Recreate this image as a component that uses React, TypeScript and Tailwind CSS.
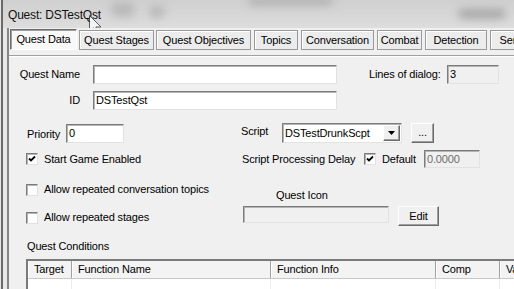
import React from "react";

const sunken =
  "border border-t-[#7c7c7c] border-l-[#7c7c7c] border-r-[#e2e2e2] border-b-[#e2e2e2] shadow-[inset_1px_1px_0_#b4b4b4]";
const raised =
  "border border-t-[#ffffff] border-l-[#ffffff] border-r-[#6a6a6a] border-b-[#6a6a6a] shadow-[inset_-1px_-1px_0_#a0a0a0]";

const tabs = [
  { label: "Quest Data", cls: "ml-[1px] w-[67px]", active: true },
  { label: "Quest Stages", cls: "ml-[2px] w-[75px]" },
  { label: "Quest Objectives", cls: "ml-[2px] w-[95px]" },
  { label: "Topics", cls: "ml-[3px] w-[44px]" },
  { label: "Conversation", cls: "ml-[3px] w-[73px]" },
  { label: "Combat", cls: "ml-[3px] w-[45px]" },
  { label: "Detection", cls: "ml-[3px] w-[62px]" },
  { label: "Services", cls: "ml-[3px] w-[60px]" },
];

const columns = [
  { label: "Target", cls: "w-[44px]" },
  { label: "Function Name", cls: "w-[199px]" },
  { label: "Function Info", cls: "w-[165px]" },
  { label: "Comp", cls: "w-[64px]" },
  { label: "Value", cls: "w-[60px]" },
];

function Field({
  className,
  disabled,
  children,
}: {
  className: string;
  disabled?: boolean;
  children?: React.ReactNode;
}) {
  return (
    <div
      className={`${className} ${sunken} ${
        disabled ? "bg-[#f0f0f0]" : "bg-white"
      } shrink-0 flex items-center pl-[2px] whitespace-nowrap overflow-hidden`}
    >
      {children}
    </div>
  );
}

function Check({ checked }: { checked?: boolean }) {
  return (
    <div className={`w-[12px] h-[12px] shrink-0 bg-white ${sunken} flex items-center justify-center`}>
      {checked && (
        <svg width="8" height="8" viewBox="0 0 8 8">
          <path d="M1 3.5 L3 5.5 L7 1.5" stroke="#000" strokeWidth="1.8" fill="none" />
        </svg>
      )}
    </div>
  );
}

export default function App() {
  return (
    <div className="w-[514px] h-[289px] overflow-hidden bg-[#e6e6e6] font-['Liberation_Sans',Arial,sans-serif] text-[11px] leading-[13px] tracking-[-0.15px] text-black">
      <div className="ml-[1px] h-full border-l-2 border-[#6a6a6a] flex flex-col">
        {/* Title bar */}
        <div className="relative h-[28px] shrink-0 overflow-hidden bg-linear-to-b from-[#cfcfcf] to-[#dddddd]">
          <div className="absolute left-[108px] top-[3px] w-[24px] h-[14px] rounded-full bg-[#8c8c8c] opacity-40 blur-[5px]" />
          <div className="absolute left-[146px] top-[6px] w-[16px] h-[12px] rounded-full bg-[#8c8c8c] opacity-40 blur-[4px]" />
          <div className="absolute left-[245px] top-[-4px] w-[85px] h-[10px] rounded-full bg-[#8c8c8c] opacity-40 blur-[4px]" />
          <div className="absolute left-[455px] top-[9px] w-[48px] h-[10px] rounded-full bg-[#7c7c7c] opacity-50 blur-[4px]" />
          <div className="relative pl-[5px] pt-[8px] text-[12px] leading-[14px] tracking-[-0.2px] text-[#111]">
            Quest: DSTestQst
          </div>
          <svg
            className="absolute left-[86px] top-[15px] opacity-80"
            width="13"
            height="21"
            viewBox="0 0 13 21"
          >
            <path
              d="M0.5 0.5 L0.5 16.5 L4.5 12.8 L7.2 19.5 L9.6 18.5 L6.9 12 L12 12 Z"
              fill="#fafafa"
              stroke="#3c3c3c"
              strokeWidth="1"
              strokeLinejoin="round"
            />
          </svg>
        </div>

        {/* Frame + client */}
        <div className="flex flex-1 min-h-0">
          <div className="w-[4px] shrink-0 bg-[#e8e8e8]" />
          <div className="flex-1 min-w-0 bg-[#f0f0f0] border-l-2 border-[#858585] flex flex-col">
            {/* Tabs */}
            <div className="flex items-end h-[22px] pt-[1px] whitespace-nowrap">
              {tabs.map((t) =>
                t.active ? (
                  <div
                    key={t.label}
                    className={`${t.cls} shrink-0 h-[21px] flex items-center justify-center bg-[#f8f8f8] border border-t-[#6a6a6a] border-l-[#6a6a6a] border-r-[#ffffff] border-b-[#ffffff] shadow-[inset_1px_1px_0_#a0a0a0]`}
                  >
                    {t.label}
                  </div>
                ) : (
                  <div
                    key={t.label}
                    className={`${t.cls} shrink-0 h-[20px] flex items-center justify-center bg-[#ececec] border border-[#9a9a9a] shadow-[inset_1px_1px_0_#ffffff]`}
                  >
                    {t.label}
                  </div>
                )
              )}
            </div>

            {/* Panel */}
            <div className="mt-[5px] flex-1 border-t border-[#a0a0a0] shadow-[inset_0_1px_0_#ffffff] flex flex-col">
              {/* Quest name row */}
              <div className="mt-[9px] h-[19px] flex items-center">
                <div className="w-[71px] text-right">Quest Name</div>
                <Field className="ml-[13px] w-[244px] h-[19px]" />
                <div className="ml-[32px] w-[78px]">Lines of dialog:</div>
                <Field className="w-[52px] h-[19px]" disabled>
                  3
                </Field>
              </div>

              {/* ID row */}
              <div className="mt-[7px] h-[19px] flex items-center">
                <div className="w-[71px] text-right">ID</div>
                <Field className="ml-[13px] w-[244px] h-[19px]">DSTestQst</Field>
              </div>

              {/* Priority / Script row */}
              <div className="mt-[13px] h-[20px] flex items-center">
                <div className="ml-[18px] w-[39px] pt-[2px]">Priority</div>
                <Field className="w-[58px] h-[19px]">0</Field>
                <div className="ml-[117px] w-[41px] mb-[4px]">Script</div>
                <div className={`w-[120px] h-[20px] shrink-0 bg-white ${sunken} flex items-center`}>
                  <div className="flex-1 pl-[2px] whitespace-nowrap">DSTestDrunkScpt</div>
                  <div className={`w-[17px] h-[16px] mr-[1px] bg-[#f0f0f0] ${raised} flex items-center justify-center`}>
                    <svg width="7" height="4" viewBox="0 0 7 4">
                      <path d="M0 0 H7 L3.5 4 Z" fill="#000" />
                    </svg>
                  </div>
                </div>
                <div className={`ml-[9px] w-[23px] h-[20px] shrink-0 bg-[#f0f0f0] ${raised} flex items-center justify-center pb-[2px]`}>
                  ...
                </div>
              </div>

              {/* Start game / Processing delay row */}
              <div className="mt-[7px] h-[18px] flex items-center">
                <div className="ml-[17px] w-[216px] flex items-center gap-[6px]">
                  <Check checked />
                  <span>Start Game Enabled</span>
                </div>
                <div className="w-[122px] whitespace-nowrap">Script Processing Delay</div>
                <Check checked />
                <div className="ml-[6px] w-[42px]">Default</div>
                <Field className="w-[56px] h-[18px] text-[#6d6d6d]" disabled>
                  0.0000
                </Field>
              </div>

              {/* Repeat options + quest icon */}
              <div className="mt-[15px] flex items-start">
                <div className="ml-[17px] w-[217px] flex flex-col">
                  <div className="h-[13px] flex items-center gap-[6px]">
                    <Check />
                    <span className="whitespace-nowrap">Allow repeated conversation topics</span>
                  </div>
                  <div className="mt-[15px] h-[13px] flex items-center gap-[6px]">
                    <Check />
                    <span>Allow repeated stages</span>
                  </div>
                </div>
                <div className="pt-[6px] flex flex-col">
                  <div className="ml-[33px] h-[13px]">Quest Icon</div>
                  <div className="mt-[4px] flex items-start">
                    <Field className="w-[146px] h-[17px]" disabled />
                    <div className={`ml-[9px] w-[41px] h-[20px] bg-[#f0f0f0] ${raised} flex items-center justify-center`}>
                      Edit
                    </div>
                  </div>
                </div>
              </div>

              {/* Conditions */}
              <div className="mt-[14px] ml-[18px] h-[13px]">Quest Conditions</div>
              <div className="mt-[6px] ml-[17px] flex-1 border-t-2 border-l-2 border-t-[#7a7a7a] border-l-[#7a7a7a] bg-white flex flex-col">
                <div className="flex h-[18px] shrink-0 bg-[#f3f3f3] border-b border-[#c8c8c8] whitespace-nowrap">
                  {columns.map((c) => (
                    <div
                      key={c.label}
                      className={`${c.cls} shrink-0 pl-[6px] flex items-center border-r border-[#a0a0a0] shadow-[inset_1px_0_0_#ffffff]`}
                    >
                      {c.label}
                    </div>
                  ))}
                </div>
                <div className="flex flex-1">
                  {columns.map((c) => (
                    <div key={c.label} className={`${c.cls} shrink-0 border-r border-[#ececec]`} />
                  ))}
                </div>
              </div>
            </div>
          </div>
        </div>
      </div>
    </div>
  );
}
